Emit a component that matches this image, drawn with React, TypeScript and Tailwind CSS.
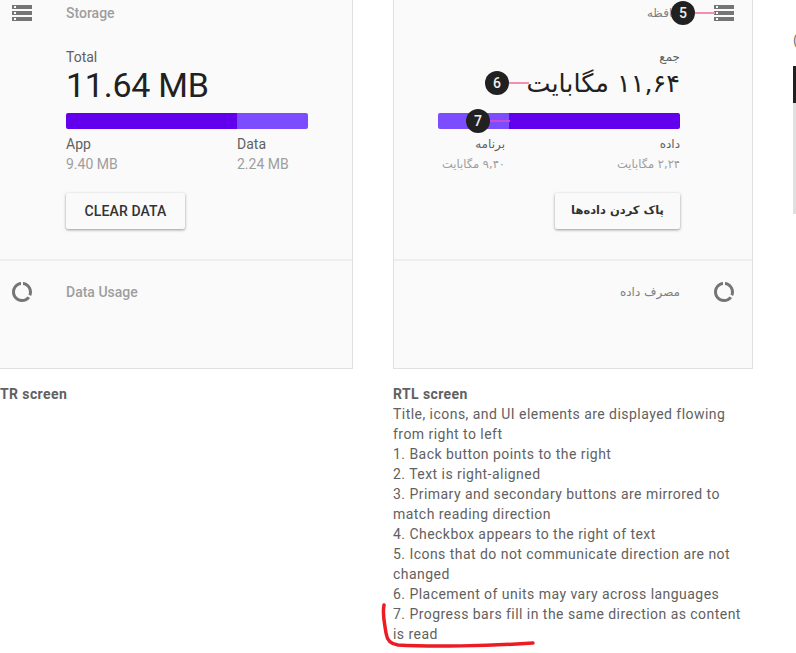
const ROBOTO = "font-['Roboto',sans-serif]";

function StorageIcon() {
  return (
    <svg width="24" height="24" viewBox="0 0 24 24" fill="#757575" className="shrink-0">
      <path d="M2 20h20v-4H2v4zm2-3h2v2H4v-2zM2 4v4h20V4H2zm4 3H4V5h2v2zm-4 7h20v-4H2v4zm2-3h2v2H4v-2z" />
    </svg>
  );
}

function UsageIcon() {
  return (
    <svg width="24" height="24" viewBox="0 0 24 24" fill="#757575" className="shrink-0">
      <path d="M13 2.05v3.03c3.39.49 6 3.39 6 6.92 0 .9-.18 1.75-.48 2.54l2.6 1.53c.56-1.24.88-2.62.88-4.07 0-5.18-3.95-9.45-9-9.95zM12 19c-3.87 0-7-3.13-7-7 0-3.53 2.61-6.43 6-6.92V2.05c-5.06.5-9 4.76-9 9.95 0 5.52 4.47 10 9.99 10 3.31 0 6.24-1.61 8.06-4.09l-2.6-1.53C16.17 17.98 14.21 19 12 19z" />
    </svg>
  );
}

function Badge({ n, line, className }: { n: number; line: string; className: string }) {
  return (
    <div dir="ltr" className={`absolute flex items-center ${className}`}>
      <div className={`relative z-10 flex h-6 w-6 items-center justify-center rounded-full bg-[#212121] text-[14px] font-medium text-[#eeeeee] ${ROBOTO}`}>
        {n}
      </div>
      <div className={`h-[2px] ${line}`} />
    </div>
  );
}

type Copy = {
  dir: "ltr" | "rtl";
  storage: string;
  total: string;
  amount: string;
  first: [string, string];
  second: [string, string];
  clear: string;
  usage: string;
  font: string;
  headCls: string;
  amountCls: string;
  labelCls: string;
  subCls: string;
  firstCol: string;
  btnCls: string;
};

function Card({ c, children }: { c: Copy; children?: React.ReactNode }) {
  return (
    <div dir={c.dir} className={`relative h-[369px] w-[360px] border-x border-b border-[#e0e0e0] bg-[#fafafa] ${c.font}`}>
      <div className="flex h-[261px] flex-col border-b-2 border-[#eeeeee]">
        <div className="flex items-start gap-8 ps-4 pt-[1px]">
          <StorageIcon />
          <span className={`pt-[2px] leading-5 ${c.headCls}`}>{c.storage}</span>
        </div>
        <div className="flex flex-col ps-[72px] pt-[22px]">
          <span className={`h-5 leading-5 text-[#616161] ${c.labelCls}`}>{c.total}</span>
          <span className={`h-[42px] text-[#212121] ${c.amountCls}`}>{c.amount}</span>
          <div className="mt-[4px] flex h-4 w-[242px] overflow-hidden rounded-[2px]">
            <div className="w-[171px] bg-[#6200ee]" />
            <div className="flex-1 bg-[#7c4dff]" />
          </div>
          <div className="mt-[5px] flex w-[242px]">
            <div className={`flex flex-col ${c.firstCol}`}>
              <span className={`h-5 leading-5 text-[#616161] ${c.labelCls}`}>{c.first[0]}</span>
              <span className={`h-5 leading-5 text-[#9e9e9e] ${c.subCls}`}>{c.first[1]}</span>
            </div>
            <div className="flex flex-col">
              <span className={`h-5 leading-5 text-[#616161] ${c.labelCls}`}>{c.second[0]}</span>
              <span className={`h-5 leading-5 text-[#9e9e9e] ${c.subCls}`}>{c.second[1]}</span>
            </div>
          </div>
          <div className="mt-[19px] flex">
            <div className={`flex h-9 items-center justify-center rounded-[2px] bg-[#fafafa] text-[#333333] shadow-[0_1px_3px_rgba(0,0,0,0.4)] ${c.btnCls}`}>
              {c.clear}
            </div>
          </div>
        </div>
      </div>
      <div className="flex items-start gap-8 ps-4 pt-[19px]">
        <UsageIcon />
        <span className={`pt-[2px] leading-5 ${c.headCls}`}>{c.usage}</span>
      </div>
      {children}
    </div>
  );
}

const ltr: Copy = {
  dir: "ltr",
  storage: "Storage",
  total: "Total",
  amount: "11.64 MB",
  first: ["App", "9.40 MB"],
  second: ["Data", "2.24 MB"],
  clear: "CLEAR DATA",
  usage: "Data Usage",
  font: ROBOTO,
  headCls: "text-[14px] font-medium text-[#9e9e9e]",
  amountCls: "text-[34px] leading-[37px] tracking-[-0.25px]",
  labelCls: "text-[14px]",
  subCls: "text-[14px]",
  firstCol: "w-[171px]",
  btnCls: "w-[119px] text-[14px] font-medium tracking-[0.1px]",
};

const rtl: Copy = {
  dir: "rtl",
  storage: "حافظه",
  total: "جمع",
  amount: "۱۱,۶۴ مگابایت",
  first: ["داده", "۲,۲۴ مگابایت"],
  second: ["برنامه", "۹,۴۰ مگابایت"],
  clear: "پاک کردن داده‌ها",
  usage: "مصرف داده",
  font: "font-['DejaVu_Sans',sans-serif]",
  headCls: "text-[12px] text-[#808080]",
  amountCls: "text-[25.5px] leading-[32px]",
  labelCls: "text-[12px]",
  subCls: "text-[11.5px]",
  firstCol: "w-[175px]",
  btnCls: "w-[125px] text-[11.5px] font-bold",
};

export default function App() {
  return (
    <div className={`relative h-[653px] w-[796px] overflow-hidden bg-white ${ROBOTO}`}>
      <div className="-ml-[7px] flex gap-10">
        <div className="w-[360px] shrink-0">
          <Card c={ltr} />
          <p className="mt-[15px] pl-[7px] text-[14px] leading-5 font-bold tracking-[0.4px] text-[#616161]">TR screen</p>
        </div>
        <div className="w-[360px] shrink-0">
          <Card c={rtl}>
            <Badge n={5} line="w-[20px] bg-[#f48fb1]" className="left-[277px] top-[1px]" />
            <Badge n={6} line="w-[20px] bg-[#f48fb1]" className="left-[91px] top-[71px]" />
            <Badge n={7} line="w-[20px] bg-[#c84bd0]" className="left-[72px] top-[109px]" />
          </Card>
          <div className="mt-[15px] text-[14px] leading-5 tracking-[0.46px] text-[#616161]">
            <p className="font-bold tracking-[0.4px]">RTL screen</p>
            <p>Title, icons, and UI elements are displayed flowing from right to left</p>
            <p>1. Back button points to the right</p>
            <p>2. Text is right-aligned</p>
            <p>3. Primary and secondary buttons are mirrored to match reading direction</p>
            <p>4. Checkbox appears to the right of text</p>
            <p>5. Icons that do not communicate direction are not changed</p>
            <p>6. Placement of units may vary across languages</p>
            <p>7. Progress bars fill in the same direction as content is read</p>
          </div>
        </div>
        <div className="w-[40px] shrink-0">
          <p className="mt-[30px] h-5 text-[14px] leading-5 text-[#757575]">(</p>
          <div className="mt-[16px] h-[37px] bg-[#212121]" />
          <div className="h-[111px] bg-[#e0e0e0]" />
        </div>
      </div>
      <svg className="absolute left-0 top-0" width="796" height="653" fill="none">
        <path
          d="M384 605 C382 615 385 625 386 633 C387 640 390 644 398 645 C430 647 490 646 533 643"
          stroke="#ed1c24"
          strokeWidth="3.5"
          strokeLinecap="round"
        />
      </svg>
    </div>
  );
}
